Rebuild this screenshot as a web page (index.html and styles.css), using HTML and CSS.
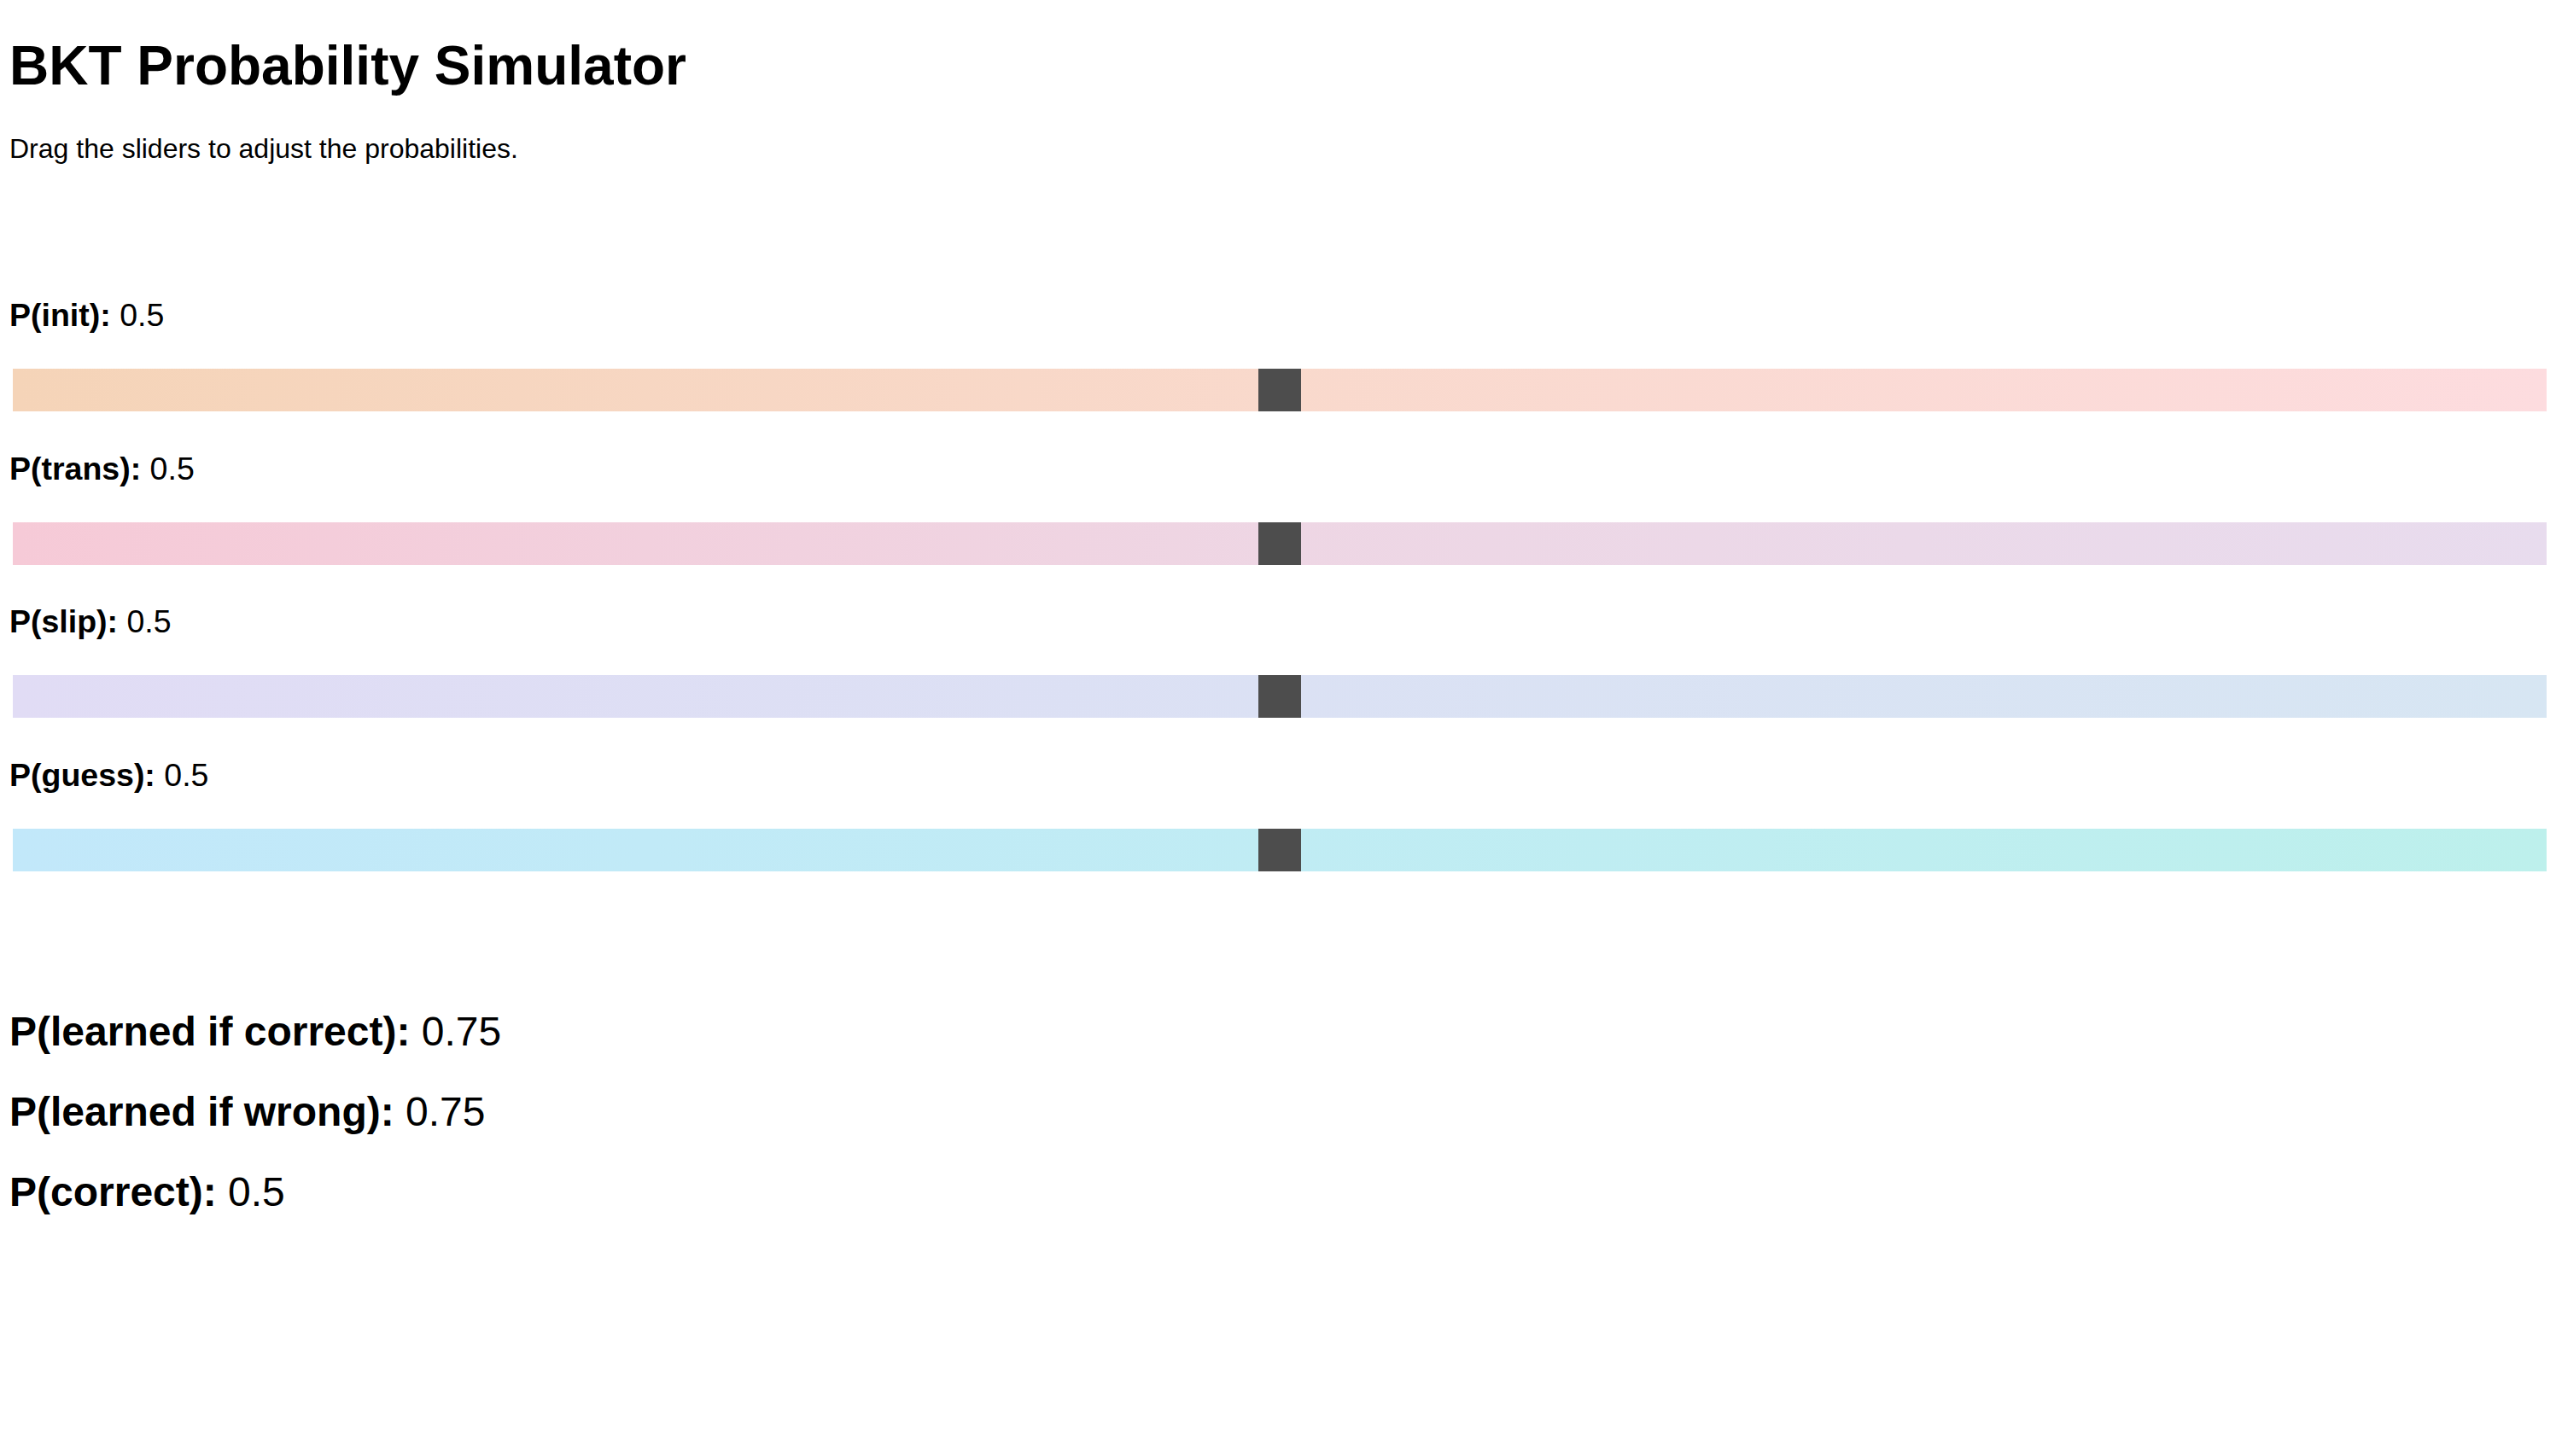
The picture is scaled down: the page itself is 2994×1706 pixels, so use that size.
FILE: index.html
```html
<!DOCTYPE html>
<html lang="en">
<head>
<meta charset="utf-8">
<title>BKT Probability Simulator</title>
<link rel="stylesheet" href="styles.css">
</head>
<body>
<main class="page">
  <h1 class="title">BKT Probability Simulator</h1>
  <p class="intro">Drag the sliders to adjust the probabilities.</p>

  <section class="sliders">
    <div class="param">
      <label class="param-label" for="p-init"><b>P(init):</b> <span>0.5</span></label>
      <input class="slider slider-init" id="p-init" type="range" min="0" max="1" step="0.01" value="0.5">
    </div>
    <div class="param">
      <label class="param-label" for="p-trans"><b>P(trans):</b> <span>0.5</span></label>
      <input class="slider slider-trans" id="p-trans" type="range" min="0" max="1" step="0.01" value="0.5">
    </div>
    <div class="param">
      <label class="param-label" for="p-slip"><b>P(slip):</b> <span>0.5</span></label>
      <input class="slider slider-slip" id="p-slip" type="range" min="0" max="1" step="0.01" value="0.5">
    </div>
    <div class="param">
      <label class="param-label" for="p-guess"><b>P(guess):</b> <span>0.5</span></label>
      <input class="slider slider-guess" id="p-guess" type="range" min="0" max="1" step="0.01" value="0.5">
    </div>
  </section>

  <section class="results">
    <p class="result"><b>P(learned if correct):</b> 0.75</p>
    <p class="result"><b>P(learned if wrong):</b> 0.75</p>
    <p class="result"><b>P(correct):</b> 0.5</p>
  </section>
</main>
</body>
</html>
```

FILE: styles.css
```css
html, body {
  margin: 0;
  padding: 0;
  background: #ffffff;
}

body {
  font-family: "Liberation Sans", Arial, sans-serif;
  color: #000000;
}

.page {
  padding: 40px 11px 0 11px;
}

.title {
  margin: 0;
  font-size: 64px;
  line-height: 74px;
  font-weight: bold;
}

.intro {
  margin: 43px 0 0 0;
  font-size: 32px;
  line-height: 34px;
}

.sliders {
  margin-top: 157px;
  display: flex;
  flex-direction: column;
}

.param {
  display: flex;
  flex-direction: column;
  padding-bottom: 45.5px;
}

.param-label {
  font-size: 37.5px;
  line-height: 42px;
  margin-bottom: 42px;
}

.param-label b {
  font-weight: bold;
}

.slider {
  -webkit-appearance: none;
  appearance: none;
  display: block;
  margin: 0 0 0 4px;
  padding: 0;
  width: calc(100% - 4px);
  height: 50px;
  border: none;
  outline: none;
  background: #eee;
}

.slider::-webkit-slider-runnable-track {
  height: 50px;
  background: transparent;
  border: none;
}

.slider::-webkit-slider-thumb {
  -webkit-appearance: none;
  appearance: none;
  width: 50px;
  height: 50px;
  background: #4d4d4d;
  border: none;
  border-radius: 0;
  cursor: pointer;
}

.slider-init {
  background: linear-gradient(to right, #f5d4b8, #f9d9cc 50%, #fddcdf);
}

.slider-trans {
  background: linear-gradient(to right, #f6cad7, #eed6e4 50%, #e8dcee);
}

.slider-slip {
  background: linear-gradient(to right, #e1dcf5, #dbe1f4 50%, #d7e6f3);
}

.slider-guess {
  background: linear-gradient(to right, #c2e8fa, #c0ecf4 50%, #bdf0ec);
}

.results {
  margin-top: 115px;
  display: flex;
  flex-direction: column;
  gap: 39px;
}

.result {
  margin: 0;
  font-size: 48px;
  line-height: 55px;
}
```
